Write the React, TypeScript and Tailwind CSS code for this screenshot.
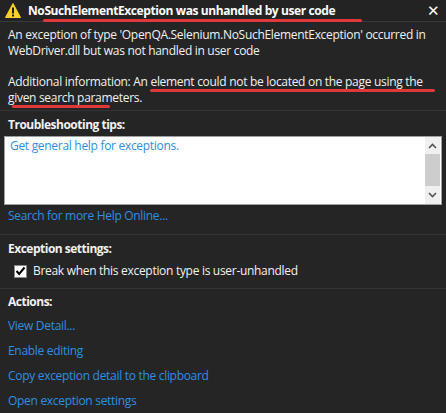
import React from "react";

const font = { fontFamily: '"Open Sans", "Noto Sans", sans-serif' };

function Warn() {
  return (
    <svg width="16" height="15" viewBox="0 0 16 15">
      <path d="M8 0.5 L15.5 14.5 L0.5 14.5 Z" fill="#f8d22a" stroke="#f8d22a" strokeLinejoin="round" />
      <rect x="7" y="4.5" width="2" height="6" fill="#1e1e1e" />
      <rect x="7" y="11.5" width="2" height="2" fill="#1e1e1e" />
    </svg>
  );
}

export default function App() {
  return (
    <div
      className="relative w-[446px] h-[413px] bg-[#252526] text-[#f1f1f1] text-[12px] leading-[16px] tracking-[-0.3px] whitespace-nowrap overflow-hidden"
      style={font}
    >
      <div className="flex items-center h-[22px] pl-[5px] pr-[6px] border-b border-[#3a3a3e] bg-[#232324]">
        <Warn />
        <span className="ml-[7px] font-bold text-[12px] tracking-[-0.4px] text-white">NoSuchElementException was unhandled by user code</span>
        <span className="ml-auto text-[15px] text-white leading-none">✕</span>
      </div>
      <div className="px-[8px] pt-[5px] pb-[4px] border-b border-[#343438]">
        <p>
          An exception of type 'OpenQA.Selenium.NoSuchElementException' occurred in
          <br />
          WebDriver.dll but was not handled in user code
        </p>
        <p className="mt-[15px]">
          Additional information: An element could not be located on the page using the
          <br />
          given search parameters.
        </p>
      </div>
      <div className="pt-[6px] px-[4px]">
        <div className="pl-[4px] font-bold tracking-[-0.5px]">Troubleshooting tips:</div>
        <div className="mt-[3px] flex h-[69px] border border-[#a0a0a0] bg-white">
          <div className="flex-1 pl-[5px] pt-[1px] text-[#2f8fe0]">Get general help for exceptions.</div>
          <div className="flex flex-col w-[15px] bg-[#f0f0f0] mr-[1px]">
            <div className="h-[17px] flex items-center justify-center">
              <svg width="9" height="6" viewBox="0 0 9 6"><path d="M1 5 L4.5 1.5 L8 5" stroke="#555" strokeWidth="1.6" fill="none" /></svg>
            </div>
            <div className="h-[32px] bg-[#cdcdcd]" />
            <div className="flex-1 flex items-center justify-center">
              <svg width="9" height="6" viewBox="0 0 9 6"><path d="M1 1 L4.5 4.5 L8 1" stroke="#555" strokeWidth="1.6" fill="none" /></svg>
            </div>
          </div>
        </div>
        <div className="pl-[4px] mt-[3px] text-[#2f8fe0]">Search for more Help Online...</div>
      </div>
      <div className="mt-[10px] border-b border-[#343438]" />
      <div className="px-[8px] pt-[6px] pb-[9px] border-b border-[#343438]">
        <div className="font-bold tracking-[-0.5px]">Exception settings:</div>
        <div className="flex items-center mt-[6px] pl-[6px]">
          <div className="w-[13px] h-[13px] bg-white border border-[#888] flex items-center justify-center">
            <svg width="11" height="10" viewBox="0 0 11 10"><path d="M1.5 5 L4.2 8 L9.5 1.5" stroke="#000" strokeWidth="2" fill="none" /></svg>
          </div>
          <span className="ml-[6px]">Break when this exception type is user-unhandled</span>
        </div>
      </div>
      <div className="px-[8px] pt-[5px]">
        <div className="font-bold tracking-[-0.5px]">Actions:</div>
        <div className="flex flex-col gap-[9px] mt-[8px] text-[#2f8fe0]">
          <span>View Detail...</span>
          <span>Enable editing</span>
          <span>Copy exception detail to the clipboard</span>
          <span>Open exception settings</span>
        </div>
      </div>
      <div className="absolute left-[43px] top-[19px] w-[319px] h-[3px] bg-[#e0393b] rounded-full" />
      <div className="absolute left-[150px] top-[89px] w-[285px] h-[3px] bg-[#e0393b] rounded-full" />
      <div className="absolute left-[12px] top-[105px] w-[98px] h-[3px] bg-[#e0393b] rounded-full" />
    </div>
  );
}
